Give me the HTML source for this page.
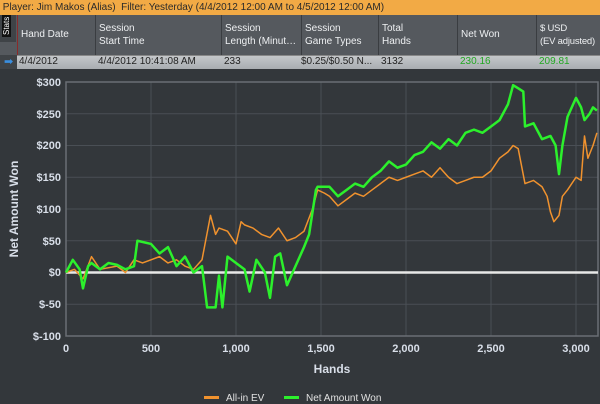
<!DOCTYPE html>
<html><head><style>
body{margin:0;width:600px;height:404px;overflow:hidden;background:#33373b;font-family:"Liberation Sans",sans-serif;position:relative}
.bar{position:absolute;left:0;top:0;width:600px;height:15px;background:#f2aa45;font-size:10px;line-height:15px;color:#2a2a2a;white-space:nowrap}
.hdr{position:absolute;left:0;top:15px;width:600px;height:40px;background:#55595e}
.tab{position:absolute;left:0;top:15px;width:16px;height:27px;background:#3f4347}
.tab span{position:absolute;left:2px;top:22px;transform:rotate(-90deg);transform-origin:0 0;font-size:8px;color:#fff;background:#111;padding:0 2px}
.col{position:absolute;top:15px;height:40px;border-left:1px solid #3a3d41;color:#eef0f2;font-size:10px;line-height:13px;box-sizing:border-box;padding:7px 0 0 3px;white-space:nowrap;overflow:hidden}
.row{position:absolute;left:0;top:55px;width:600px;height:13px;background:linear-gradient(#c4c7ca,#a9adb1);border-top:1px solid #888}
.cell{position:absolute;top:56px;font-size:10px;line-height:12px;color:#222;white-space:nowrap}
</style></head><body>
<div class="bar">&nbsp;Player: Jim Makos (Alias)&nbsp; Filter: Yesterday (4/4/2012 12:00 AM to 4/5/2012 12:00 AM)</div>
<div class="hdr"></div>
<div class="tab"><span>Stats</span></div>
<div class="col" style="left:17px;width:79px;border-left:1px solid #8a2a2a;padding-top:13px">Hand Date</div>
<div class="col" style="left:95px;width:127px">Session<br>Start Time</div>
<div class="col" style="left:221px;width:81px">Session<br>Length (Minut…</div>
<div class="col" style="left:301px;width:79px">Session<br>Game Types</div>
<div class="col" style="left:378px;width:80px">Total<br>Hands</div>
<div class="col" style="left:457px;width:80px;padding-top:13px">Net Won</div>
<div class="col" style="left:536px;width:64px;font-size:9.5px;letter-spacing:-0.2px">$ USD<br>(EV adjusted)</div>
<div class="row"></div>
<div style="position:absolute;left:0;top:55px;width:17px;height:14px;background:#3f4347"></div>
<div class="cell" style="left:4px;color:#3a8fe0;font-size:11px">➡</div>
<div class="cell" style="left:19px">4/4/2012</div>
<div class="cell" style="left:98px">4/4/2012 10:41:08 AM</div>
<div class="cell" style="left:224px">233</div>
<div class="cell" style="left:301px">$0.25/$0.50 N...</div>
<div class="cell" style="left:381px">3132</div>
<div class="cell" style="left:460px;color:#22a822">230.16</div>
<div class="cell" style="left:539px;color:#22a822">209.81</div>
<svg width="600" height="404" style="position:absolute;left:0;top:0" font-family="Liberation Sans, sans-serif">
<g stroke="#4a4f55" stroke-width="1">
<line x1="66" y1="113.7" x2="598" y2="113.7"/><line x1="66" y1="145.5" x2="598" y2="145.5"/><line x1="66" y1="177.2" x2="598" y2="177.2"/><line x1="66" y1="209" x2="598" y2="209"/><line x1="66" y1="240.7" x2="598" y2="240.7"/><line x1="66" y1="304.2" x2="598" y2="304.2"/>
<line x1="151" y1="82" x2="151" y2="336"/><line x1="236" y1="82" x2="236" y2="336"/><line x1="321" y1="82" x2="321" y2="336"/><line x1="406" y1="82" x2="406" y2="336"/><line x1="491" y1="82" x2="491" y2="336"/><line x1="576" y1="82" x2="576" y2="336"/>
</g>
<rect x="66" y="82" width="532" height="254" fill="none" stroke="#6a6f75" stroke-width="1.5"/>
<line x1="66" y1="272.5" x2="598" y2="272.5" stroke="#e8e8e8" stroke-width="2.5"/>
<g transform="translate(66,272.5) scale(0.17,-0.635)" fill="none" stroke-linejoin="round">
<polyline vector-effect="non-scaling-stroke" stroke="#f0922e" stroke-width="1.5" points="0,0 50,5 100,-10 150,25 200,5 300,10 350,0 400,20 450,15 500,20 550,25 600,15 650,20 700,10 750,5 800,20 850,90 880,60 900,70 950,65 1000,45 1030,80 1050,75 1100,70 1150,60 1200,55 1250,70 1300,50 1350,55 1400,65 1450,100 1480,130 1520,125 1550,120 1600,105 1650,115 1700,125 1750,120 1800,130 1850,140 1900,150 1950,145 2000,150 2050,155 2100,160 2150,150 2200,165 2250,150 2300,140 2350,145 2400,150 2450,150 2500,160 2550,180 2600,190 2630,200 2660,195 2700,140 2750,145 2800,135 2830,120 2850,95 2870,80 2900,90 2920,120 2950,130 3000,150 3030,145 3050,215 3070,180 3100,200 3123,220"/>
<polyline vector-effect="non-scaling-stroke" stroke="#2cf02c" stroke-width="2.5" points="0,0 40,20 80,5 100,-25 130,10 150,15 200,5 250,15 300,12 350,5 400,10 420,50 500,45 550,30 600,40 650,10 700,25 750,0 800,10 830,-55 880,-55 900,-5 920,-55 950,25 1000,15 1050,5 1080,-30 1120,20 1170,0 1200,-40 1230,25 1260,30 1300,-20 1350,10 1400,40 1430,60 1470,130 1480,135 1550,135 1600,120 1650,130 1700,140 1750,135 1800,150 1850,160 1900,175 1950,165 2000,170 2050,185 2100,190 2150,205 2200,195 2250,210 2300,200 2350,220 2400,225 2450,220 2500,230 2550,240 2600,265 2630,295 2660,290 2690,285 2700,230 2750,235 2800,210 2850,215 2880,200 2900,155 2920,200 2950,245 3000,275 3030,260 3050,240 3080,250 3100,260 3123,255"/>
</g>
<g fill="#d8dee8" font-size="11" font-weight="bold" text-anchor="end">
<text x="61" y="86">$300</text><text x="61" y="118">$250</text><text x="61" y="149">$200</text><text x="61" y="181">$150</text><text x="61" y="213">$100</text><text x="61" y="245">$50</text><text x="61" y="276">$0</text><text x="61" y="308">$-50</text><text x="61" y="340">$-100</text>
</g>
<g fill="#d8dee8" font-size="11" font-weight="bold" text-anchor="middle">
<text x="66" y="352">0</text><text x="151" y="352">500</text><text x="236" y="352">1,000</text><text x="321" y="352">1,500</text><text x="406" y="352">2,000</text><text x="491" y="352">2,500</text><text x="576" y="352">3,000</text>
<text x="332" y="373" font-size="12">Hands</text>
<text transform="translate(18,209) rotate(-90)" font-size="12">Net Amount Won</text>
</g>
<rect x="204" y="396" width="15" height="3" fill="#f0922e"/>
<text x="226" y="401" fill="#e0e0e0" font-size="10">All-in EV</text>
<rect x="284" y="396" width="15" height="3" fill="#2cf02c"/>
<text x="306" y="401" fill="#e0e0e0" font-size="10">Net Amount Won</text>
</svg>
</body></html>
